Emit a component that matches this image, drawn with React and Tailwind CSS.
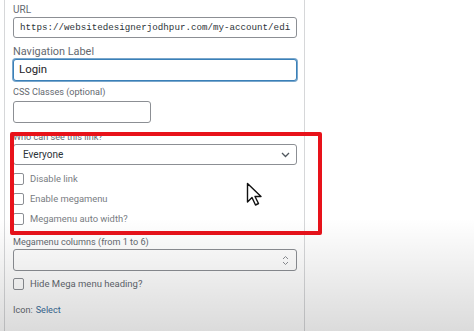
export default function App() {
  const label = "h-[12px] flex items-center text-[9.1px] leading-none text-[#646970] whitespace-nowrap";
  const font = { fontFamily: 'Roboto, "Noto Sans", sans-serif' };
  return (
    <div className="relative w-[474px] h-[331px] overflow-hidden bg-white" style={font}>
      <div className="ml-[4px] w-[301px] h-full border-l border-r border-[#d6d7d9] pl-[8px] pr-[8px] pt-[4px] flex flex-col">
        <div className={label + " text-[10px]"}>URL</div>
        <div className="mt-[1px] h-[21px] w-[284px] border border-[#8c8f94] rounded-[3px] bg-white flex items-center pl-[6px] overflow-hidden whitespace-nowrap">
          <span className="text-[9.2px] text-[#2c3338]" style={{ fontFamily: '"Liberation Mono", monospace' }}>https://websitedesignerjodhpur.com/my-account/edi</span>
        </div>
        <div className="mt-[8px] h-[12px] flex items-center text-[10.9px] leading-none text-[#646970]">Navigation Label</div>
        <div className="mt-[1px] h-[22px] w-[284px] border border-[#3a80b8] rounded-[3px] bg-white flex items-center pl-[5px] shadow-[0_0_0_1px_#7aa7cc]">
          <span className="text-[11.4px] text-[#1d2327]">Login</span>
        </div>
        <div className={label + " mt-[6px]"}>CSS Classes (optional)</div>
        <div className="mt-[2px] h-[22px] w-[138px] border border-[#8c8f94] rounded-[3px] bg-white"></div>
        <div className={label + " mt-[9px]"}>Who can see this link?</div>
        <div className="h-[21px] w-[284px] border border-[#8c8f94] rounded-[3px] bg-white flex items-center justify-between pl-[9px] pr-[6px]">
          <span className="text-[10px] text-[#2c3338]">Everyone</span>
          <svg width="9" height="6" viewBox="0 0 9 6"><path d="M1 1l3.5 3.5L8 1" fill="none" stroke="#50575e" strokeWidth="1.3" /></svg>
        </div>
        <div className="mt-[8px] flex flex-col gap-[8px]">
          {["Disable link", "Enable megamenu", "Megamenu auto width?"].map((t) => (
            <div key={t} className="h-[12px] flex items-center gap-[6px]">
              <div className="w-[11px] h-[12px] border border-[#8c8f94] rounded-[2px] bg-white"></div>
              <span className="text-[9.4px] leading-none text-[#787c82]">{t}</span>
            </div>
          ))}
        </div>
        <div className={label + " mt-[12px]"}>Megamenu columns (from 1 to 6)</div>
        <div className="h-[22px] w-[284px] border border-[#8c8f94] rounded-[3px] bg-white flex items-center justify-end pr-[7px]">
          <svg width="7" height="11" viewBox="0 0 7 11"><path d="M1 4l2.5-2.5L6 4M1 7l2.5 2.5L6 7" fill="none" stroke="#8c8f94" strokeWidth="1" /></svg>
        </div>
        <div className="mt-[7px] h-[12px] flex items-center gap-[6px]">
          <div className="w-[11px] h-[12px] border border-[#8c8f94] rounded-[2px] bg-white"></div>
          <span className="text-[9.5px] leading-none text-[#646970]">Hide Mega menu heading?</span>
        </div>
        <div className="mt-[15px] h-[12px] flex items-center text-[9.1px] leading-none">
          <span className="text-[#646970]">Icon:</span>
          <span className="ml-[3px] text-[#3a6f9c]">Select</span>
        </div>
      </div>

      {/* red annotation box */}
      <div className="absolute left-[10px] top-[132px] w-[312px] h-[103px] border-[4px] border-[#e8121a] rounded-[2px] pointer-events-none"></div>

      {/* mouse cursor */}
      <svg className="absolute left-[246px] top-[182px]" width="18" height="26" viewBox="0 0 18 26">
        <path d="M1.5 1.5 L1.5 20 L6 15.5 L9.5 23 L12.5 21.5 L9 14.5 L15 14.5 Z" fill="#fff" stroke="#111" strokeWidth="1.4" strokeLinejoin="round" />
      </svg>

      {/* bottom vignette gradient */}
      <div className="absolute inset-0 pointer-events-none bg-[linear-gradient(to_bottom,rgba(0,0,0,0)_0%,rgba(0,0,0,0)_66%,rgba(0,0,0,0.14)_100%)]"></div>
    </div>
  );
}
